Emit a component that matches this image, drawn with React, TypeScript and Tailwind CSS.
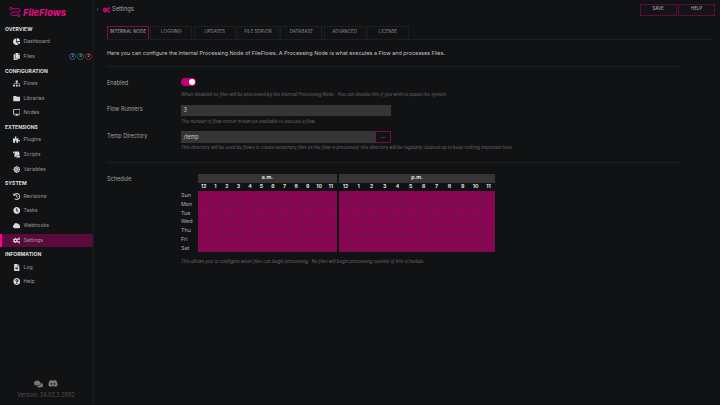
import React from "react";
import { FaChartPie, FaCopy, FaSitemap, FaFolder, FaDesktop, FaPuzzlePiece, FaScroll, FaDharmachakra, FaHistory, FaClock, FaCloud, FaCogs, FaFileAlt, FaQuestionCircle, FaComments, FaDiscord, FaChevronLeft } from "react-icons/fa";

const sections: { title: string; items: { label: string; Icon: React.ComponentType<{ className?: string }>; active?: boolean; badges?: boolean }[] }[] = [
  { title: "OVERVIEW", items: [{ label: "Dashboard", Icon: FaChartPie }, { label: "Files", Icon: FaCopy, badges: true }] },
  { title: "CONFIGURATION", items: [{ label: "Flows", Icon: FaSitemap }, { label: "Libraries", Icon: FaFolder }, { label: "Nodes", Icon: FaDesktop }] },
  { title: "EXTENSIONS", items: [{ label: "Plugins", Icon: FaPuzzlePiece }, { label: "Scripts", Icon: FaScroll }, { label: "Variables", Icon: FaDharmachakra }] },
  { title: "SYSTEM", items: [{ label: "Revisions", Icon: FaHistory }, { label: "Tasks", Icon: FaClock }, { label: "Webhooks", Icon: FaCloud }, { label: "Settings", Icon: FaCogs, active: true }] },
  { title: "INFORMATION", items: [{ label: "Log", Icon: FaFileAlt }, { label: "Help", Icon: FaQuestionCircle }] },
];
const tabs = ["INTERNAL NODE", "LOGGING", "UPDATES", "FILE SERVER", "DATABASE", "ADVANCED", "LICENSE"];
const days = ["Sun", "Mon", "Tue", "Wed", "Thu", "Fri", "Sat"];
const hours = ["12", "1", "2", "3", "4", "5", "6", "7", "8", "9", "10", "11"];

function Badge({ n, c }: { n: string; c: string }) {
  return <span className={`flex h-[7px] w-[7px] items-center justify-center rounded-full border text-[3.5px] text-[#e0e0e0] ${c}`}>{n}</span>;
}

function Half({ label, cell }: { label: string; cell: string }) {
  return (
    <div className="flex flex-col">
      <div className="flex h-[9px] items-center justify-center bg-[#353535] text-[5.2px] font-bold text-[#e5e5e5]">{label}</div>
      <div className="flex h-[8.5px] bg-[#101113]">
        {hours.map((h) => (
          <div key={h} className={`${cell} flex items-center justify-center text-[5.2px] font-bold text-[#e0e0e0]`}>{h}</div>
        ))}
      </div>
      <div className="flex flex-col bg-[#8a0655]">
        {days.map((d) => (
          <div key={d} className="flex h-[8.72px]">
            {hours.map((h) => (
              <div key={h} className={`${cell} border-r border-b border-[#6f1149]`} />
            ))}
          </div>
        ))}
      </div>
    </div>
  );
}

export default function App() {
  return (
    <div className="flex h-[405px] w-[720px] overflow-hidden bg-[#111214] font-['Inter',sans-serif] text-[#d0d0d0]">
      <aside className="flex w-[94px] shrink-0 flex-col border-r border-[#1a1b1e]">
        <div className="flex h-[24.45px] items-center pl-[9px]">
          <svg viewBox="0 0 14 12" className="h-[10px] w-[12px]" fill="none" stroke="#e8057f" strokeWidth="1">
            <circle cx="2" cy="2" r="1.5" />
            <path d="M3.5 2H11a2 2 0 0 1 0 4H4a2 2 0 0 0 0 4h6" />
            <circle cx="11.5" cy="10" r="1.5" />
          </svg>
          <span className="ml-[2px] text-[9.4px] font-bold italic leading-none text-[#f00a87]">FileFlows</span>
        </div>
        {sections.map((s) => (
          <div key={s.title} className="mb-[1.3px] flex flex-col">
            <div className="flex h-[10.5px] items-center pl-[5px] text-[5.1px] font-bold leading-none text-[#dedede]">{s.title}</div>
            <div className="mt-[0.55px] flex flex-col">
              {s.items.map((it) => (
                <div key={it.label} className={`mb-[1.67px] flex h-[13px] items-center pl-[12.5px] ${it.active ? "border-l-2 border-[#ff0090] bg-[#5a0b3b] !pl-[10.5px]" : ""}`}>
                  <it.Icon className="h-[7px] w-[7.5px] text-[#d8d8d8]" />
                  <span className="ml-[3.5px] text-[5.1px] leading-none text-[#9c9c9c]">{it.label}</span>
                  {it.badges && (
                    <span className="ml-auto mr-[1px] flex gap-[1px]">
                      <Badge n="2" c="border-[#1f5f96]" />
                      <Badge n="3" c="border-[#1c7040]" />
                      <Badge n="2" c="border-[#8c2234]" />
                    </span>
                  )}
                </div>
              ))}
            </div>
          </div>
        ))}
        <div className="mt-auto flex flex-col items-center pb-[6.5px] pr-[1px]">
          <div className="flex items-center gap-[5px] text-[#777]">
            <FaComments className="h-[8px] w-[9px]" />
            <FaDiscord className="h-[9px] w-[10px]" />
          </div>
          <div className="mt-[3.5px] text-[5.5px] leading-[7px] text-[#505050]">Version: 24.02.3.2682</div>
        </div>
      </aside>
      <main className="flex min-w-0 flex-1 flex-col">
        <header className="flex h-[18px] items-center pt-[1px] pl-[1.5px]">
          <FaChevronLeft className="h-[3px] w-[3px] text-[#777]" />
          <FaCogs className="ml-[4px] h-[6px] w-[7px] text-[#ff0090]" />
          <span className="ml-[2.5px] text-[5.7px] text-[#a5a5a5]">Settings</span>
          <div className="ml-auto mr-[5px] flex gap-[1.5px]">
            {["SAVE", "HELP"].map((b) => (
              <div key={b} className="flex h-[12px] w-[37px] items-center justify-center border border-[#5f0b40] bg-[#131417] text-[4.3px] font-medium text-[#a5a5a5]">{b}</div>
            ))}
          </div>
        </header>
        <div className="ml-[13px] mr-[8px] mt-[8px] flex gap-[1.33px] border-b border-[#1d1e21]">
          {tabs.map((t, i) => (
            <div key={t} className={`flex h-[12.5px] w-[42px] items-center justify-center border border-b-0 text-[4.5px] ${i === 0 ? "border-[#8a0655] text-[#a8a8a8]" : "border-[#1d1e21] text-[#8c8c8c]"}`}>{t}</div>
          ))}
        </div>
        <div className="ml-[13px] mr-[40px] flex flex-col">
          <p className="flex h-[27.5px] items-center border-b border-[#1d1e21] pt-[1px] text-[5.45px] leading-none text-[#c4c4c4]">Here you can configure the Internal Processing Node of FileFlows. A Processing Node is what executes a Flow and processes Files.</p>
          <div className="flex pt-[10.5px]">
            <label className="w-[74px] pt-[1px] text-[5.55px] text-[#a0a0a0]">Enabled</label>
            <div className="flex flex-col">
              <div className="relative h-[8.5px] w-[15px] rounded-full bg-[#c0007a]">
                <span className="absolute right-[1px] top-[1px] h-[6.5px] w-[6.5px] rounded-full bg-white" />
              </div>
              <span className="mt-[6px] text-[4.4px] italic leading-[6px] text-[#6a6a6a]">When disabled no files will be processed by the Internal Processing Node. &nbsp;You can disable this if you wish to pause the system.</span>
            </div>
          </div>
          <div className="flex pt-[6.5px]">
            <label className="w-[74px] text-[5.55px] leading-[9px] text-[#a0a0a0]">Flow Runners</label>
            <div className="flex flex-col">
              <div className="flex h-[11.5px] w-[210px] items-center bg-[#353535] pl-[2.5px] text-[5.5px] text-[#c8c8c8]">3</div>
              <span className="mt-[3px] text-[4.4px] italic leading-[6px] text-[#6a6a6a]">The number of flow runner instances available to execute a flow.</span>
            </div>
          </div>
          <div className="flex pt-[6px]">
            <label className="w-[74px] pt-[1px] text-[5.55px] leading-[9px] text-[#a0a0a0]">Temp Directory</label>
            <div className="flex flex-col">
              <div className="flex h-[12px] w-[210px]">
                <div className="flex flex-1 items-center bg-[#353535] pl-[2.5px] text-[5.5px] text-[#c8c8c8]">/temp</div>
                <div className="flex w-[16px] items-center justify-center border border-[#7a0a50] text-[5px] text-[#aaa]">...</div>
              </div>
              <span className="mt-[2px] text-[4.4px] italic leading-[6px] text-[#6a6a6a]">This directory will be used by flows to create temporary files as the flow is processed. this directory will be regularly cleaned up to keep nothing important here.</span>
            </div>
          </div>
          <div className="mt-[10.5px] flex border-t border-[#1d1e21] pt-[11px]">
            <label className="w-[74px] pt-[1px] text-[5.55px] leading-[9px] text-[#a0a0a0]">Schedule</label>
            <div className="flex flex-col">
              <div className="flex">
                <div className="flex w-[17px] flex-col pt-[17.5px]">
                  {days.map((d) => (
                    <div key={d} className="flex h-[8.72px] items-center text-[5.4px] text-[#b0b0b0]">{d}</div>
                  ))}
                </div>
                <div className="flex gap-[2.5px]">
                  <Half label="a.m." cell="w-[11.55px]" />
                  <Half label="p.m." cell="w-[13px]" />
                </div>
              </div>
              <span className="mt-[6.5px] text-[4.4px] italic leading-[6px] text-[#6a6a6a]">This allows you to configure when files can begin processing. &nbsp;No files will begin processing outside of this schedule.</span>
            </div>
          </div>
        </div>
      </main>
    </div>
  );
}
